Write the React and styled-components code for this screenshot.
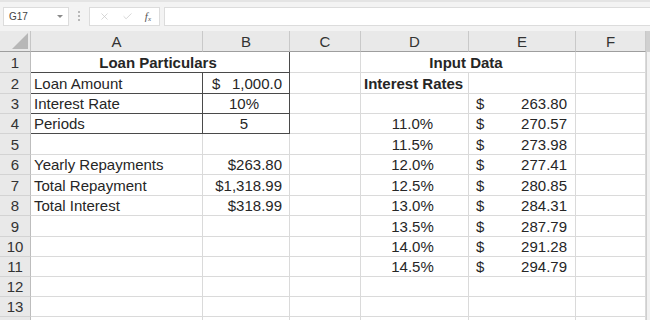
import React from "react";
import styled, { createGlobalStyle } from "styled-components";
import { X, Check } from "lucide-react";

const GlobalStyle = createGlobalStyle`
  body {
    margin: 0;
    background: #ffffff;
  }
`;

const Window = styled.div`
  width: 650px;
  height: 320px;
  overflow: hidden;
  font-family: "Liberation Sans", Arial, sans-serif;
  color: #262626;
  background: #ffffff;
`;

const FormulaBar = styled.div`
  box-sizing: border-box;
  height: 31px;
  padding: 5px 0 0 3px;
  display: flex;
  align-items: flex-start;
  background: #f3f3f3;
  border-top: 2px solid #e4e4e4;
`;

const Box = styled.div`
  box-sizing: border-box;
  height: 19px;
  background: #ffffff;
  border: 1px solid #dcdcdc;
  display: flex;
  align-items: center;
`;

const NameBox = styled(Box)`
  width: 66px;
  padding: 0 5px;
  justify-content: space-between;
  font-size: 10px;
  color: #444;
`;

const Caret = styled.span`
  width: 0;
  height: 0;
  border-left: 3px solid transparent;
  border-right: 3px solid transparent;
  border-top: 3px solid #8a8a8a;
`;

const Grip = styled.div`
  width: 2px;
  height: 10px;
  margin: 4px 9px 0 9px;
  background: repeating-linear-gradient(#b8b8b8 0 2px, transparent 2px 4px);
`;

const ActionBox = styled(Box)`
  width: 71px;
  padding: 0 8px 0 9px;
  justify-content: space-between;
  color: #c4c4c4;
`;

const Fx = styled.span`
  font-family: "Liberation Serif", serif;
  font-style: italic;
  font-size: 11px;
  color: #555;

  sub {
    font-size: 7px;
    vertical-align: -1px;
  }
`;

const FormulaInput = styled(Box)`
  flex: 1;
  margin-left: 4px;
  border-right: none;
`;

const Sheet = styled.div`
  display: grid;
  grid-template-columns: 31px 172px 87px 71px 108px 107px 70px 4px;
  grid-template-rows: 21px 21px 21px 20px 20px 21px 20px 21px 20px 21px 20px 20px 20px 20px 20px;
  font-size: 15px;
`;

const Corner = styled.div`
  box-sizing: border-box;
  background: #e9e9e9;
  border-right: 1px solid #c6c6c6;
  border-bottom: 1px solid #9e9e9e;
  display: flex;
  align-items: flex-end;
  justify-content: flex-end;
  padding: 0 2px 2px 0;

  &::after {
    content: "";
    width: 16px;
    height: 16px;
    background: #b7b7b7;
    clip-path: polygon(100% 0, 100% 100%, 0 100%);
  }
`;

const ColHead = styled.div`
  box-sizing: border-box;
  background: #e9e9e9;
  border-right: 1px solid #c9c9c9;
  border-bottom: 1px solid #9e9e9e;
  display: flex;
  align-items: center;
  justify-content: center;
  color: #333;
`;

const RowHead = styled.div`
  box-sizing: border-box;
  background: #e9e9e9;
  border-right: 1px solid #bdbdbd;
  border-bottom: 1px solid #d3d3d3;
  display: flex;
  align-items: center;
  justify-content: center;
  color: #333;
`;

const Edge = styled.div`
  background: ${(p) => (p.$head ? "#d0d0d0" : "#f2f2f2")};
  border-left: 1px solid #cfcfcf;
`;

const Cell = styled.div`
  box-sizing: border-box;
  grid-column: span ${(p) => p.$span || 1};
  border-right: 1px solid ${(p) => (p.$dark ? "#4a4a4a" : "#dadada")};
  border-bottom: 1px solid ${(p) => (p.$dark ? "#4a4a4a" : "#dadada")};
  padding: ${(p) => (p.$wide ? "0 8px 0 7px" : "0 7px 0 3px")};
  display: flex;
  align-items: center;
  justify-content: ${(p) => p.$align || "flex-start"};
  font-weight: ${(p) => (p.$bold ? 700 : 400)};
  white-space: nowrap;
  overflow: hidden;
`;

const Dollar = styled.span`
  padding-left: ${(p) => p.$inset || 0}px;
`;

const columns = ["A", "B", "C", "D", "E", "F"];

const rates = ["11.0%", "11.5%", "12.0%", "12.5%", "13.0%", "13.5%", "14.0%", "14.5%"];
const payments = ["263.80", "270.57", "273.98", "277.41", "280.85", "284.31", "287.79", "291.28", "294.79"];

// each row: list of cells A..F, merged cells carry span
const rows = [
  [
    { text: "Loan Particulars", bold: true, align: "center", span: 2, dark: true },
    {},
    { text: "Input Data", bold: true, align: "center", span: 2 },
    {},
  ],
  [
    { text: "Loan Amount", dark: true },
    { acct: "1,000.0", dark: true, inset: 6 },
    {},
    { text: "Interest Rates", bold: true },
    {},
    {},
  ],
  [
    { text: "Interest Rate", dark: true },
    { text: "10%", align: "center", dark: true },
    {},
    {},
    { acct: payments[0], wide: true },
    {},
  ],
  [
    { text: "Periods", dark: true },
    { text: "5", align: "center", dark: true },
    {},
    { text: rates[0], align: "center" },
    { acct: payments[1], wide: true },
    {},
  ],
];

const summary = [
  ["", ""],
  ["Yearly Repayments", "$263.80"],
  ["Total Repayment", "$1,318.99"],
  ["Total Interest", "$318.99"],
];

for (let i = 0; i < 10; i++) {
  const s = summary[i] || ["", ""];
  const rate = rates[i + 1];
  rows.push([
    { text: s[0] },
    { text: s[1], align: "flex-end" },
    {},
    { text: rate || "", align: "center" },
    rate ? { acct: payments[i + 2], wide: true } : {},
    {},
  ]);
}

function SheetCell({ cell }) {
  if (cell.acct) {
    return (
      <Cell $align="space-between" $dark={cell.dark} $span={cell.span} $wide={cell.wide}>
        <Dollar $inset={cell.inset}>$</Dollar>
        <span>{cell.acct}</span>
      </Cell>
    );
  }
  return (
    <Cell
      $align={cell.align}
      $bold={cell.bold}
      $dark={cell.dark}
      $span={cell.span}
      $wide={cell.wide}
    >
      {cell.text}
    </Cell>
  );
}

export default function App() {
  return (
    <Window>
      <GlobalStyle />
      <FormulaBar>
        <NameBox>
          G17
          <Caret />
        </NameBox>
        <Grip />
        <ActionBox>
          <X size={11} strokeWidth={1.5} />
          <Check size={11} strokeWidth={1.5} />
          <Fx>
            f<sub>x</sub>
          </Fx>
        </ActionBox>
        <FormulaInput />
      </FormulaBar>
      <Sheet>
        <Corner />
        {columns.map((c) => (
          <ColHead key={c}>{c}</ColHead>
        ))}
        <Edge $head />
        {rows.map((row, r) => (
          <React.Fragment key={r}>
            {/* the last row is only a sliver at the window's bottom edge */}
            <RowHead>{r < 13 ? r + 1 : ""}</RowHead>
            {row.map((cell, c) => (
              <SheetCell key={c} cell={cell} />
            ))}
            <Edge />
          </React.Fragment>
        ))}
      </Sheet>
    </Window>
  );
}
